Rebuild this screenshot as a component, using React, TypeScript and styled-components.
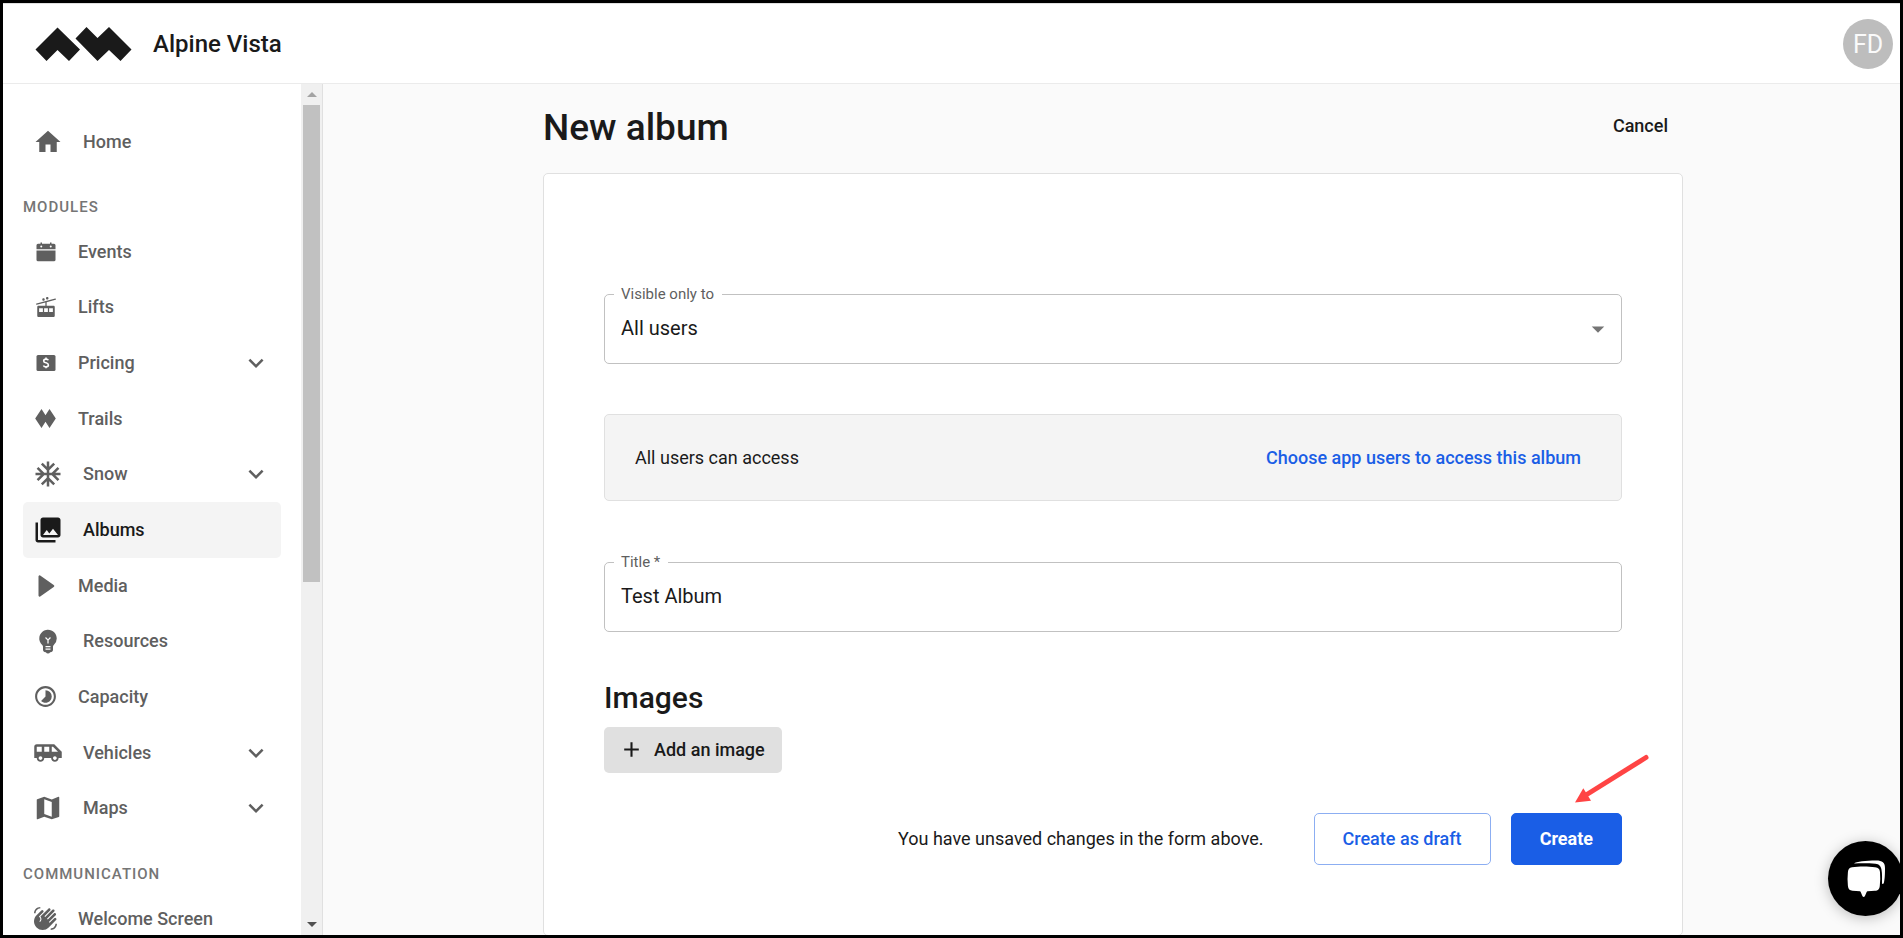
import { useState } from 'react';
import type { ComponentType } from 'react';
import styled, { createGlobalStyle, css } from 'styled-components';
import {
  MdAcUnit,
  MdAdd,
  MdAirportShuttle,
  MdArrowDropDown,
  MdEmojiObjects,
  MdExpandMore,
  MdHome,
  MdMap,
  MdPhotoLibrary,
  MdTimelapse,
  MdWavingHand,
} from 'react-icons/md';
import { FaTram } from 'react-icons/fa';

const color = {
  ink: '#1a1a1a',
  muted: '#5f5f5f',
  label: '#757575',
  line: '#e0e0e0',
  outline: '#c1c1c1',
  page: '#fafafa',
  panel: '#f4f4f4',
  primary: '#1a5ee6',
  arrow: '#ff4444',
};

const GlobalStyle = createGlobalStyle`
  *, *::before, *::after { box-sizing: border-box; }
  body {
    margin: 0;
    color: ${color.ink};
    background: ${color.page};
    font-family: Roboto, "Liberation Sans", sans-serif;
  }
  button, input, select { font: inherit; color: inherit; }
`;

/* ---------- shell ---------- */

const Shell = styled.div`
  position: relative;
  display: flex;
  flex-direction: column;
  height: 100vh;
  overflow: hidden;
  border: 3px solid #000;
`;

const Header = styled.header`
  display: flex;
  flex: none;
  align-items: center;
  gap: 21px;
  padding: 15px 7px 14px 32px;
  background: #fff;
  border-top: 1px solid ${color.line};
  border-bottom: 1px solid #ebebeb;
`;

const Brand = styled.span`
  font-size: 24px;
  line-height: 30px;
  font-weight: 500;
`;

const Avatar = styled.button`
  width: 50px;
  height: 50px;
  margin-left: auto;
  padding: 0;
  border: 0;
  border-radius: 50%;
  background: #bdbdbd;
  color: ${color.page};
  font-size: 25px;
`;

const Body = styled.div`
  display: flex;
  flex: 1;
  min-height: 0;
`;

/* ---------- sidebar ---------- */

const Sidebar = styled.aside`
  display: flex;
  flex: none;
  width: 320px;
  background: #fff;
  border-right: 1px solid ${color.line};
`;

const Nav = styled.nav`
  flex: 1;
  padding: 30px 20px 0;
  overflow: hidden;
`;

const NavHeading = styled.h2`
  margin: 0;
  padding: 28px 0 7px;
  color: ${color.label};
  font-size: 15px;
  line-height: 20px;
  font-weight: 500;
  letter-spacing: 1px;
  text-transform: uppercase;
`;

const NavList = styled.ul<{ $minHeight?: number }>`
  display: grid;
  grid-auto-rows: minmax(55px, 1fr);
  min-height: ${(p) => p.$minHeight ?? 0}px;
  margin: 0;
  padding: 0;
  list-style: none;
`;

const NavLink = styled.a<{ $active?: boolean }>`
  display: flex;
  align-items: center;
  gap: 20px;
  height: 100%;
  padding: 0 10px;
  border-radius: 5px;
  color: ${color.muted};
  font-size: 18px;
  line-height: 24px;
  font-weight: 500;
  text-decoration: none;
  ${(p) =>
    p.$active &&
    css`
      background: ${color.panel};
      color: ${color.ink};
    `}
`;

const IconSlot = styled.span<{ $wide?: boolean }>`
  display: flex;
  flex: none;
  align-items: center;
  justify-content: center;
  width: ${(p) => (p.$wide ? 30 : 25)}px;
`;

const Chevron = styled(MdExpandMore)`
  margin-left: auto;
`;

const ScrollRail = styled.div`
  display: flex;
  flex: none;
  flex-direction: column;
  align-items: center;
  width: 21px;
  background: #f0f0f0;
`;

const RailEnd = styled.span<{ $down?: boolean }>`
  display: flex;
  align-items: center;
  height: 21px;
  &::after {
    content: '';
    border: 5px solid transparent;
    ${(p) =>
      p.$down
        ? css`
            border-top-color: #505050;
            border-bottom-width: 0;
          `
        : css`
            border-bottom-color: #a3a3a3;
            border-top-width: 0;
          `}
  }
`;

const RailTrack = styled.div`
  flex: 1;
  width: 17px;
`;

const RailThumb = styled.div`
  height: 59%;
  background: #c1c1c1;
`;

/* ---------- content ---------- */

const Main = styled.main`
  flex: 1;
  min-width: 0;
  padding: 20px 24px 0 27px;
  overflow: hidden;
  background: ${color.page};
`;

const Container = styled.div`
  max-width: 1140px;
  margin: 0 auto;
`;

const TitleRow = styled.div`
  display: flex;
  align-items: flex-start;
  justify-content: space-between;
  margin-bottom: 22px;
`;

const PageTitle = styled.h1`
  margin: 0;
  font-size: 37px;
  line-height: 47px;
  font-weight: 500;
`;

const SectionTitle = styled.h2`
  margin: 48px 0 11px;
  font-size: 30px;
  line-height: 36px;
  font-weight: 500;
`;

const TextButton = styled.button<{ $primary?: boolean }>`
  padding: 0 15px;
  border: 0;
  background: none;
  color: ${(p) => (p.$primary ? color.primary : color.ink)};
  font-size: 18px;
  line-height: 44px;
  font-weight: 500;
`;

const Card = styled.form`
  padding: 120px 60px 70px;
  background: #fff;
  border: 1px solid ${color.line};
  border-radius: 5px;
`;

const Field = styled.div`
  position: relative;
  height: 70px;
`;

const FieldLabel = styled.label`
  position: absolute;
  top: -10px;
  left: 10px;
  padding: 0 8px 0 7px;
  background: #fff;
  color: ${color.muted};
  font-size: 15px;
  line-height: 20px;
`;

const control = css`
  width: 100%;
  height: 100%;
  padding: 0 16px 2px;
  border: 1px solid ${color.outline};
  border-radius: 5px;
  background: #fff;
  font-size: 20px;
`;

const Select = styled.select`
  ${control}
  appearance: none;
`;

const TextInput = styled.input`
  ${control}
`;

const SelectArrow = styled(MdArrowDropDown)`
  position: absolute;
  top: 20px;
  right: 9px;
  color: #757575;
  pointer-events: none;
`;

const AccessPanel = styled.div`
  display: flex;
  align-items: center;
  justify-content: space-between;
  min-height: 87px;
  margin: 50px 0 61px;
  padding: 0 25px 0 30px;
  background: ${color.panel};
  border: 1px solid ${color.line};
  border-radius: 5px;
`;

const Note = styled.p`
  margin: 0;
  font-size: 18px;
  line-height: 24px;
`;

const AddButton = styled.button`
  display: flex;
  align-items: center;
  gap: 10px;
  height: 46px;
  padding: 0 17px 2px 15px;
  border: 0;
  border-radius: 5px;
  background: ${color.line};
  font-size: 18px;
  font-weight: 500;
`;

const Actions = styled.div`
  position: relative;
  display: flex;
  align-items: center;
  justify-content: flex-end;
  gap: 20px;
  margin-top: 40px;
`;

const UnsavedNote = styled(Note)`
  margin-right: 30px;
`;

const ActionButton = styled.button<{ $filled?: boolean }>`
  height: 52px;
  padding: 0 28px 2px;
  border: 1px solid ${(p) => (p.$filled ? color.primary : '#8caef2')};
  border-radius: 5px;
  background: ${(p) => (p.$filled ? color.primary : '#fff')};
  color: ${(p) => (p.$filled ? '#fff' : color.primary)};
  font-size: 18px;
  font-weight: ${(p) => (p.$filled ? 700 : 500)};
`;

const Pointer = styled.svg`
  position: absolute;
  right: -27px;
  bottom: calc(100% + 10px);
  pointer-events: none;
`;

const ChatButton = styled.button`
  position: absolute;
  right: -3px;
  bottom: 19px;
  width: 75px;
  height: 75px;
  padding: 0;
  border: 0;
  border-radius: 50%;
  background: #000;
  box-shadow: 0 2px 14px rgba(0, 0, 0, 0.25);
`;

/* ---------- drawings ---------- */

type IconProps = { size?: number };

const Logo = () => (
  <svg width="97" height="35" viewBox="0 0 97 35" fill={color.ink} aria-hidden="true">
    <path d="M0.5 22.500 L22.5 0.500 L45 22.500 L34 34 L22.500 23 L11.500 34 Z" />
    <path d="M40.500 11.500 L51.500 0 L62.500 11 L74 0 L96.500 22.500 L85.500 34 L74 23 L62.500 34 Z" />
  </svg>
);

const CalendarIcon = ({ size = 20 }: IconProps) => (
  <svg width={size} height={size} viewBox="0 0 20 20" fill="currentColor">
    <path
      fillRule="evenodd"
      d="M4.500 0.500h1.500v1.200h8V0.500h1.500v1.200h2.500a1.500 1.500 0 0 1 1.500 1.500V7.200H.5V3.200A1.500 1.500 0 0 1 2 1.700h2.500zM5.250 3.600a1 1 0 1 0 0 2 1 1 0 0 0 0-2zM14.750 3.600a1 1 0 1 0 0 2 1 1 0 0 0 0-2z"
    />
    <path d="M.5 8.500h19V17.700a1.600 1.600 0 0 1-1.600 1.600H2.100A1.600 1.600 0 0 1 .5 17.700z" />
  </svg>
);

const PricingIcon = ({ size = 20 }: IconProps) => (
  <svg width={size} height={size} viewBox="0 0 20 20">
    <rect x="0.500" y="2" width="19" height="16" rx="1.500" fill="currentColor" />
    <path
      d="M12.300 7.300C12 6.500 11.200 6.100 10 6.100c-1.400 0-2.300.7-2.300 1.800 0 2.600 4.700 1.300 4.700 4 0 1.200-1 1.900-2.400 1.900-1.300 0-2.200-.5-2.500-1.400M10 4.600v1.500M10 13.800v1.500"
      fill="none"
      stroke="#fff"
      strokeWidth="1.600"
    />
  </svg>
);

const TrailsIcon = ({ size = 21 }: IconProps) => (
  <svg width={size} height={size} viewBox="0 0 21 21" fill="currentColor">
    <path d="M6.500 1 L10.500 7.200 L14.500 1 L20.800 10.500 L14.500 20 L10.500 13.800 L6.500 20 L.2 10.500 Z" />
  </svg>
);

const PlayIcon = ({ size = 22 }: IconProps) => (
  <svg width={size} height={size} viewBox="0 0 22 22" fill="currentColor">
    <path d="M3.500 1.500a1.100 1.100 0 0 1 1.700-1L18.700 10a1.200 1.200 0 0 1 0 2L5.200 21.500a1.100 1.100 0 0 1-1.700-1z" />
  </svg>
);

const ChatIcon = () => (
  <svg width="75" height="75" viewBox="0 0 75 75" aria-hidden="true">
    <path
      d="M26 22.400C28 20.600 38 19.500 48 19.500c6.500 0 9 2 9 7.500 0 6-.2 12-1.300 15.300-.3.900-1.700 1-1.700 0 0-5 .3-9-.5-13.500-.7-4-2.500-5.600-6-6-7-.7-14-.5-21.500-.4z"
      fill="#fff"
    />
    <path
      d="M24 26.200c7-1 16-1 23 0 3.500.5 4.700 1.700 5 5 .4 4.500.3 9-.2 13.500-.4 3.300-1.500 4.800-5 5.100l-7.300.4c-1.400.1-2 5.800-3.800 5.800s-2.400-5.700-3.800-5.800l-7.400-.4c-3-.3-4.200-1.700-4.600-5-.5-4.500-.5-9 0-13.500.3-3.200 1.300-4.700 4.100-5.100z"
      fill="#fff"
    />
  </svg>
);

const PointerArrow = () => (
  <Pointer width="75" height="49" viewBox="0 0 75 49" aria-hidden="true">
    <path d="M12 41 L72 3.500" stroke={color.arrow} strokeWidth="5" strokeLinecap="round" />
    <path d="M1 48.500 L9.300 34.300 L17 46.700 Z" fill={color.arrow} />
  </Pointer>
);

/* ---------- navigation data ---------- */

type Item = {
  label: string;
  icon: ComponentType<IconProps>;
  size?: number;
  wide?: boolean;
  expandable?: boolean;
  active?: boolean;
};

const home: Item[] = [{ label: 'Home', icon: MdHome, size: 30, wide: true }];

const modules: Item[] = [
  { label: 'Events', icon: CalendarIcon },
  { label: 'Lifts', icon: FaTram, size: 20 },
  { label: 'Pricing', icon: PricingIcon, expandable: true },
  { label: 'Trails', icon: TrailsIcon },
  { label: 'Snow', icon: MdAcUnit, size: 30, wide: true, expandable: true },
  { label: 'Albums', icon: MdPhotoLibrary, size: 30, wide: true, active: true },
  { label: 'Media', icon: PlayIcon },
  { label: 'Resources', icon: MdEmojiObjects, size: 30, wide: true },
  { label: 'Capacity', icon: MdTimelapse, size: 25 },
  { label: 'Vehicles', icon: MdAirportShuttle, size: 30, wide: true, expandable: true },
  { label: 'Maps', icon: MdMap, size: 30, wide: true, expandable: true },
];

const communication: Item[] = [{ label: 'Welcome Screen', icon: MdWavingHand, size: 25 }];

const NavItems = ({ items, minHeight }: { items: Item[]; minHeight?: number }) => (
  <NavList $minHeight={minHeight}>
    {items.map(({ label, icon: Icon, size, wide, expandable, active }) => (
      <li key={label}>
        <NavLink href="#" $active={active} aria-current={active ? 'page' : undefined}>
          <IconSlot $wide={wide}>
            <Icon size={size} />
          </IconSlot>
          {label}
          {expandable && <Chevron size={30} />}
        </NavLink>
      </li>
    ))}
  </NavList>
);

export default function App() {
  const [title, setTitle] = useState('Test Album');

  return (
    <Shell>
      <GlobalStyle />
      <Header>
        <Logo />
        <Brand>Alpine Vista</Brand>
        <Avatar type="button">FD</Avatar>
      </Header>
      <Body>
        <Sidebar>
          <Nav>
            <NavItems items={home} />
            <NavHeading>Modules</NavHeading>
            <NavItems items={modules} minHeight={612} />
            <NavHeading>Communication</NavHeading>
            <NavItems items={communication} />
          </Nav>
          <ScrollRail aria-hidden="true">
            <RailEnd />
            <RailTrack>
              <RailThumb />
            </RailTrack>
            <RailEnd $down />
          </ScrollRail>
        </Sidebar>
        <Main>
          <Container>
            <TitleRow>
              <PageTitle>New album</PageTitle>
              <TextButton type="button">Cancel</TextButton>
            </TitleRow>
            <Card onSubmit={(e) => e.preventDefault()}>
              <Field>
                <Select id="visibility" defaultValue="all">
                  <option value="all">All users</option>
                </Select>
                <FieldLabel htmlFor="visibility">Visible only to</FieldLabel>
                <SelectArrow size={30} />
              </Field>
              <AccessPanel>
                <Note>All users can access</Note>
                <TextButton type="button" $primary>
                  Choose app users to access this album
                </TextButton>
              </AccessPanel>
              <Field>
                <TextInput
                  id="title"
                  type="text"
                  value={title}
                  onChange={(e) => setTitle(e.target.value)}
                />
                <FieldLabel htmlFor="title">Title *</FieldLabel>
              </Field>
              <SectionTitle>Images</SectionTitle>
              <AddButton type="button">
                <MdAdd size={25} />
                Add an image
              </AddButton>
              <Actions>
                <UnsavedNote>You have unsaved changes in the form above.</UnsavedNote>
                <ActionButton type="button">Create as draft</ActionButton>
                <ActionButton type="submit" $filled>
                  Create
                </ActionButton>
                <PointerArrow />
              </Actions>
            </Card>
          </Container>
        </Main>
      </Body>
      <ChatButton type="button" aria-label="Open chat">
        <ChatIcon />
      </ChatButton>
    </Shell>
  );
}
